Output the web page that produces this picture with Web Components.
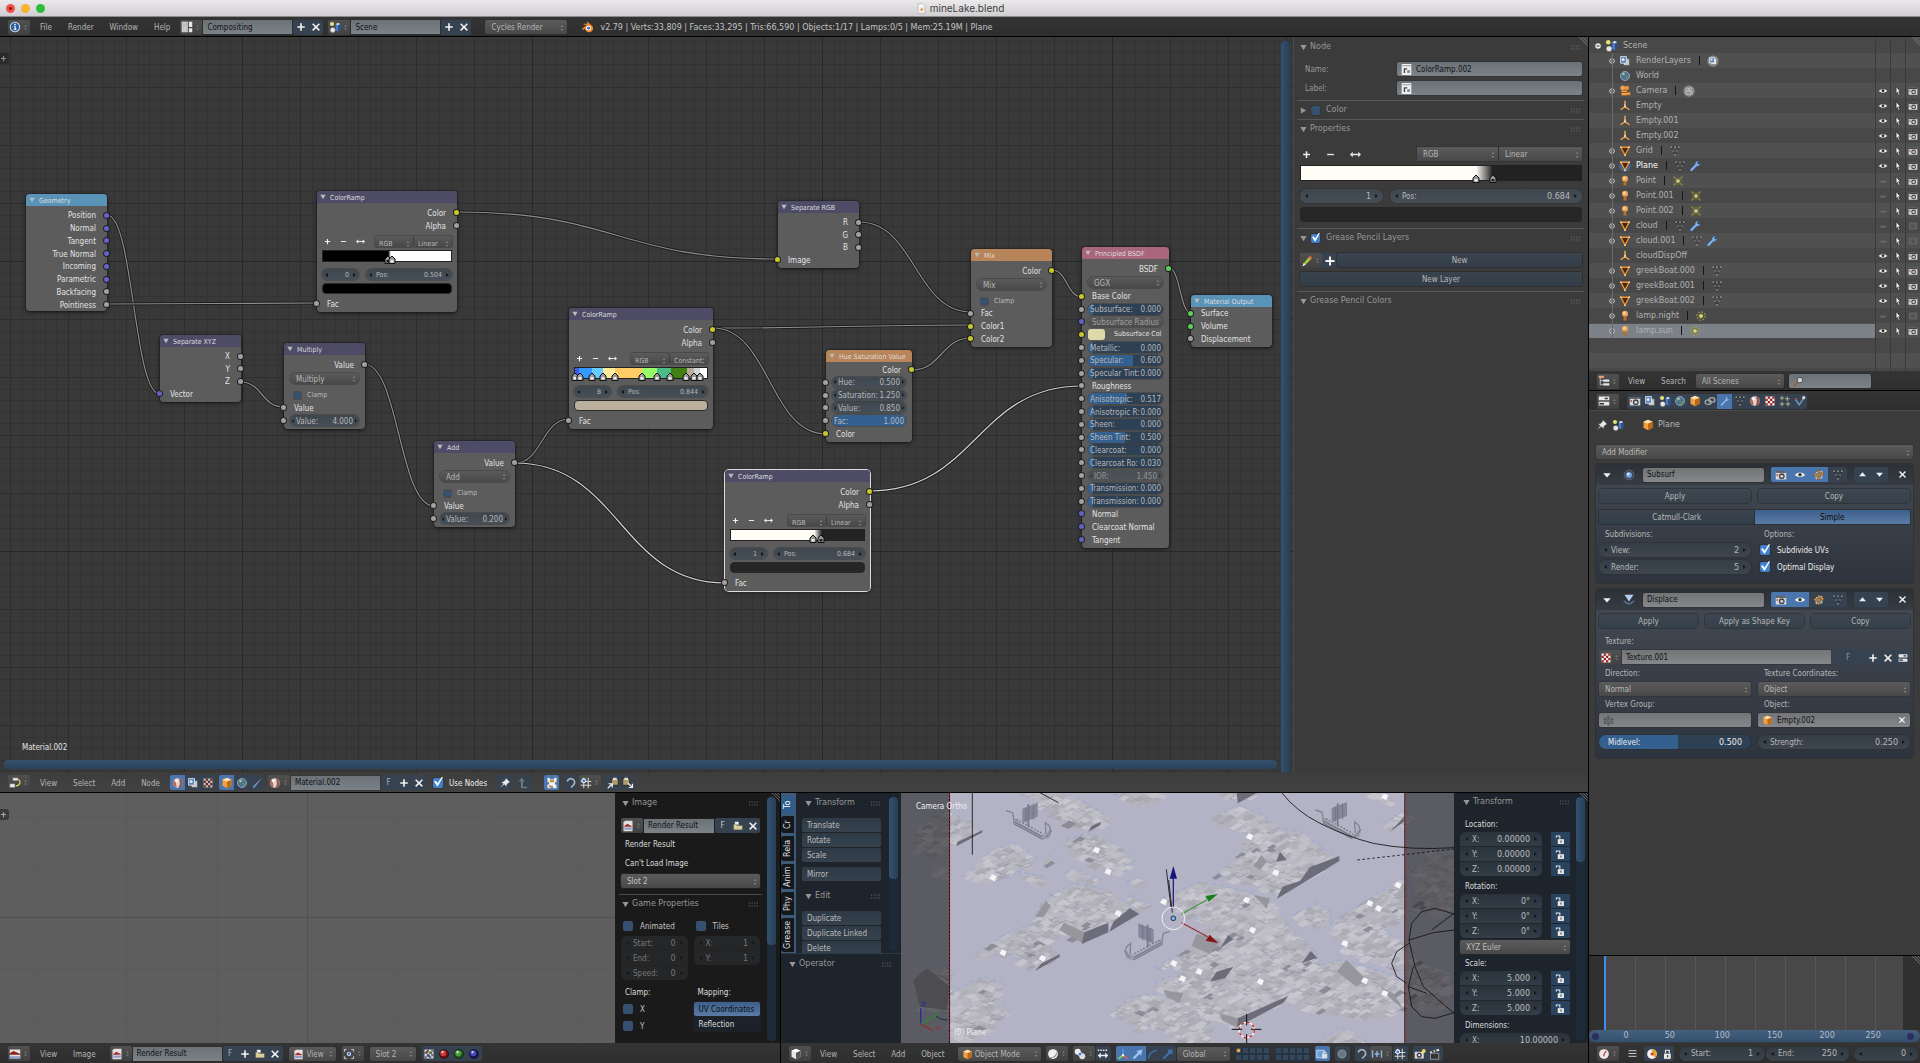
<!DOCTYPE html>
<html lang="en">
<head>
<meta charset="utf-8">
<title>mineLake.blend</title>
<style>
html,body{margin:0;height:100%;background:#3a3a3a}
body{overflow:hidden}
</style>
</head>
<body>
<blender-app></blender-app>
<script>
const BASE=`
*{box-sizing:border-box}
:host{display:block;min-width:0;font:8px/14px "DejaVu Sans Condensed","DejaVu Sans",sans-serif;color:var(--fg,#b8b8b8)}
button,input,select{font:inherit;color:inherit;margin:0;padding:0;border:0;background:none;min-width:0;outline:0;border-radius:0}
button,select{white-space:nowrap}
`;
const define=(name,css,render)=>customElements.define(name,class extends HTMLElement{
  connectedCallback(){
    if(this.shadowRoot)return;
    const root=this.attachShadow({mode:'open'});
    root.innerHTML='<style>'+BASE+css+'</style>'+render(this);
  }
});
const at=(el,n,d='')=>el.hasAttribute(n)?el.getAttribute(n):d;

/* ---------- icons, on a 16 unit grid ---------- */
const ball=(c,d)=>`<circle cx="8" cy="8" r="6" fill="${d}" stroke="#111" stroke-width=".8"/><circle cx="7" cy="7" r="4" fill="${c}"/><circle cx="6" cy="5.500" r="1.500" fill="#fff" opacity=".8"/>`;
const checker=(a,b)=>{let s=`<rect x="2" y="2" width="12" height="12" fill="${a}"/>`;for(let i=0;i<4;i++)for(let j=0;j<4;j++)if((i+j)%2)s+=`<rect x="${2+i*3}" y="${2+j*3}" width="3" height="3" fill="${b}"/>`;return s};
const lockBody='<rect x="4" y="7.500" width="9" height="7" fill="#e8e8e8"/><rect x="8" y="9.500" width="1.500" height="3" fill="#333"/>';
const ICON={
info:'<circle cx="8" cy="8" r="7" fill="#c9d6e8"/><circle cx="8" cy="8" r="5.600" fill="#2f5f9f"/><circle cx="8" cy="4.800" r="1.100" fill="#fff"/><path d="M6.500 7H9v4h1v1H6.300v-1h1V8h-.8z" fill="#fff"/>',
layout:'<path d="M1 1h8v14H1z" fill="#e8e8e8"/><path d="M10.500 1H15v7h-4.500zM10.500 9.500H15V15h-4.500z" fill="#e8e8e8"/><path d="M2.500 2.500h5v3h-5zM2.500 7h5v6.500h-5z" fill="#cfcfcf" stroke="#777" stroke-width=".5"/>',
scene:'<circle cx="4" cy="4" r="2.800" fill="#e5e07a"/><circle cx="5" cy="12" r="3.500" fill="#e8e8e8" stroke="#555" stroke-width=".6"/><path d="M9 4l3-1.500L15 4v8l-3 2-3-2z" fill="#4d7fc9"/><path d="M9 4l3-1.500L15 4l-3 1.500z" fill="#dfeaff"/><path d="M12 5.500L15 4v8l-3 2z" fill="#2b4f8f"/>',
blender:'<path d="M1 10.500L8 5H3.500V3.600H9L7.500 2l1.200-1 6 5.200a5 5 0 0 1-2 8.300 5.500 5.500 0 0 1-7.500-3.700L2 11.700z" fill="#f08a2c"/><circle cx="10" cy="9.500" r="3.300" fill="#fff"/><circle cx="10.200" cy="9.500" r="1.900" fill="#2a6fb5"/>',
plus:'<path d="M6.700 2h2.600v4.700H14v2.600H9.300V14H6.700V9.300H2V6.700h4.700z" fill="#f2f2f2"/>',
minus:'<path d="M2 6.800h12v2.400H2z" fill="#e8e8e8"/>',
swap:'<path d="M0 8l4-4v3h8V4l4 4-4 4V9H4v3z" fill="#e8e8e8"/>',
x:'<path d="M3.500 1.800L8 6.200l4.500-4.400 1.700 1.700L9.800 8l4.400 4.500-1.700 1.700L8 9.800l-4.500 4.400-1.700-1.700L6.200 8 1.800 3.500z" fill="#f2f2f2"/>',
nodes:'<path d="M5 1h7v4H5zM1 9h7v5H1z" fill="#e8e8e8" stroke="#555" stroke-width=".6"/><path d="M12 3c4 2 4 8-3 9" fill="none" stroke="#e0d060" stroke-width="1.600"/>',
mat:'<circle cx="8" cy="8" r="6.500" fill="#e9d2cc"/><path d="M9 1.600a6.500 6.500 0 0 1-1 12.900c3-3 3-9 1-12.900z" fill="#8a5a54"/><path d="M3 12c-2-3-2-5 0-8 2 2 3 6 3 10z" fill="#b06a5c"/><circle cx="6" cy="5" r="1.600" fill="#fff"/>',
layers:'<path d="M6 5h8v9H6z" fill="#c8c8c8" stroke="#555"/><path d="M2 2h8v9H2z" fill="#5d86bd" stroke="#eee"/><circle cx="5.500" cy="6" r="2" fill="#dfe8f5"/>',
checker:checker('#efefef','#9b2020'),
checkergrey:checker('#bdbdbd','#6b2a2a'),
checkerrgb:checker('#d8d8d8','#6a6a6a')+'<path d="M4 4h3v3H4z" fill="#a03030"/><path d="M9 5h3v3H9z" fill="#3a8a3a"/><path d="M6 9h3v3H6z" fill="#3a3aa0"/>',
cube:'<path d="M8 1l6 2.500v8L8 15l-6-3.500v-8z" fill="#f0a040"/><path d="M8 1l6 2.500L8 6.200 2 3.500z" fill="#ffe0b0"/><path d="M8 6.200l6-2.700v8L8 15z" fill="#b86a18"/>',
cubewhite:'<path d="M8 1l6 2.500v8L8 15l-6-3.500v-8z" fill="#e6e6e6"/><path d="M8 1l6 2.500L8 6.200 2 3.500z" fill="#fff"/><path d="M8 6.200l6-2.700v8L8 15z" fill="#555"/>',
world:'<circle cx="8" cy="8" r="6" fill="#4f6f98" stroke="#a9b9cf"/><path d="M4 4l4-1 1 3-3 2-3 0zM9 8l4 0-2 5-3-1z" fill="#5d8a60"/><circle cx="6" cy="5" r="1.500" fill="#dce8f5" opacity=".7"/>',
brush:'<path d="M15 1l-7 9-3 4-3 1 1-3 4-4z" fill="#6f8fb5"/>',
pin:'<path d="M9 1l6 6-2 .5-2.500 2.500-.5 3-3-3L1 15l4.500-6L3 6.500l3-.5L8.500 3.500z" fill="#e6e6e6" stroke="#444" stroke-width=".5"/>',
up:'<path d="M5 1l4 5H6.500v7H12v2H4V6H1z" fill="#777"/>',
back:'<path d="M2 1h3v2h6V1h3v6h-2v3h2v5H9v-3H7v3H2v-5h2V7H2z" fill="#f0f0f0"/><path d="M5 4h6v3H5zM4 11h3v3H4z" fill="#d08a30"/>',
magnet:'<path d="M3 6a5 5 0 1 1 9 4l-4 4" fill="none" stroke="#aeb4ba" stroke-width="2.200"/>',
snapgrid:'<path d="M5 1v14M11 1v14M1 6h14M1 11h14" stroke="#d5d5d5" stroke-width="1.400"/><circle cx="5" cy="5" r="3.200" fill="#fff"/><circle cx="5" cy="5" r="2" fill="#3f7fe0"/>',
copy:'<path d="M6 2h9v9H6z" fill="#b09a68" stroke="#222"/><path d="M8 1h5v3H8z" fill="#ddd"/><path d="M1 15l6-6M7 14V9H2" fill="none" stroke="#eee" stroke-width="1.600"/>',
paste:'<path d="M1 2h9v9H1z" fill="#b09a68" stroke="#222"/><path d="M3 1h5v3H3z" fill="#ddd"/><path d="M8 8l6 6M14 9v5H9" fill="none" stroke="#eee" stroke-width="1.600"/>',
image:'<path d="M4 1h10v14H2V3z" fill="#e8e0e0"/><path d="M2 3l2-2v2z" fill="#aaa"/><path d="M3 8l4-3 6 3v1H3z" fill="#a03030"/><path d="M3 10h10v3H3z" fill="#8d9cc8"/>',
imageed:'<path d="M1 2h14v12H1z" fill="#e8e0e0"/><path d="M1 7l5-3 9 4v1H1z" fill="#8a2020"/><path d="M1 11h14v3H1z" fill="#8d9cc8"/>',
folder:'<path d="M3 1h6v5H3z" fill="#eee"/><path d="M1 5h4l1 2h9v7H1z" fill="#d9cf9a" stroke="#555" stroke-width=".5"/>',
pivot:'<path d="M2 5V2h3M11 2h3v3M14 11v3h-3M5 14H2v-3" fill="none" stroke="#bbb" stroke-width="1.500"/><circle cx="8" cy="8" r="2.800" fill="#fff"/><circle cx="8" cy="8" r="1.900" fill="#3f7fe0"/>',
red:ball('#c83a3a','#701010'),green:ball('#4aa03a','#1c5a14'),blue:ball('#4a4ac0','#14145a'),
white:'<circle cx="8" cy="8" r="6.500" fill="#f2f2f2"/><path d="M12.500 4a6.500 6.500 0 0 1-9 8.500c5 0 9-3 9-8.500z" fill="#999"/>',
median:'<circle cx="5" cy="5" r="4" fill="#eee"/><circle cx="11" cy="11" r="4" fill="#ddd"/><circle cx="8" cy="8" r="2.500" fill="#3f6fd0" stroke="#fff"/>',
arrows:'<path d="M1 3h14" stroke="#eee" stroke-width="2" stroke-dasharray="2 1.500"/><path d="M1 10l4-4v3h6V6l4 4-4 4v-3H5v3z" fill="#eee"/>',
manip:'<path d="M8 1v9" stroke="#5a8aff" stroke-width="2.200"/><path d="M8 10l-6 4" stroke="#6fe05a" stroke-width="2.200"/><path d="M8 10l6 4" stroke="#f06050" stroke-width="2.200"/><circle cx="8" cy="9.500" r="1.500" fill="#fff"/>',
move:'<path d="M1 13L8 6 6 4l8-2-2 8-2-2-7 7z" fill="#9cc8f8"/>',
rotate:'<path d="M2 14Q3 5 13 3" fill="none" stroke="#3f6fa8" stroke-width="2"/>',
scale:'<path d="M1 13l7-7V2h6v6h-4l-7 7z" fill="#3f6fa8"/>',
locklayer:'<path d="M1 3h10v10H1z" fill="#6aa0e0" stroke="#dfe9f5"/><path d="M8 8h7v6H8z" fill="#ddd"/><path d="M9.500 8V5.500h4V8" fill="none" stroke="#ddd" stroke-width="1.300"/>',
prop:'<circle cx="8" cy="8" r="5" fill="#667380" stroke="#7d8893" stroke-width="2"/>',
snapbar:'<path d="M2 3v10M14 3v10M5 8h6M8 4v8" stroke="#8fb8e8" stroke-width="1.800"/>',
rendercam:'<path d="M1 3h14v11H1z" fill="#d8d8d8"/><path d="M1 3h14v2H1z" fill="#444"/><circle cx="9" cy="9.500" r="3.800" fill="#444"/><circle cx="9" cy="9.500" r="2" fill="#c9d4e4"/><path d="M2 7h2v2H2z" fill="#c03030"/>',
renderstar:'<path d="M1 5h12v9H1z" fill="#d8d8d8"/><circle cx="7" cy="9.500" r="3.400" fill="#444"/><circle cx="7" cy="9.500" r="1.500" fill="#eee"/><circle cx="13" cy="4" r="2.600" fill="#f0d850"/>',
clapper:'<path d="M2 7h11v8H2z" fill="#333" stroke="#ccc" stroke-width=".8"/><path d="M1 5l12-4 1 2.500L2 7z" fill="#ddd"/><path d="M4 4l2 2M8 3l2 2" stroke="#222" stroke-width="1.500"/>',
camobj:'<circle cx="5" cy="4" r="3.300" fill="#f0a24e"/><circle cx="10.500" cy="4" r="3" fill="#e8923a"/><path d="M3 7h8v3l4-1v5l-4-1v1H3z" fill="#f0a24e" stroke="#7a4a14" stroke-width=".6"/><path d="M3 10h8" stroke="#7a4a14"/>',
camdata:'<circle cx="8" cy="8" r="7.500" fill="#8a8a8a"/><circle cx="6" cy="6" r="2" fill="none" stroke="#ccc"/><circle cx="10" cy="5.500" r="1.800" fill="none" stroke="#ccc"/><path d="M4 8.500h6v1l2-.5v3l-2-.5v1H4z" fill="none" stroke="#ccc"/>',
layersdata:'<circle cx="8" cy="8" r="7.500" fill="#8a8a8a"/><path d="M6 5h6v7H6z" fill="#e8e8e8"/><path d="M3.500 3.500h6.500v7H3.500z" fill="#5d86bd" stroke="#eee"/><circle cx="6" cy="6" r="1.500" fill="#dfe8f5"/>',
empty:'<path d="M8 1v8M8 9l-6 4M8 9l6 4" stroke="#f0a24e" stroke-width="2" fill="none"/><path d="M8 6v4" stroke="#fff0d8" stroke-width="1.500"/>',
mesh:'<path d="M2.500 3h11L8 13.500z" fill="#3d2a14" stroke="#f0922f" stroke-width="1.800"/><path d="M1.500 2h2v2h-2zM12.500 2h2v2h-2zM7 12.500h2v2H7z" fill="#ffd9a8"/>',
meshdata:'<path d="M2.500 3h11L8 13z" fill="none" stroke="#2a2a2a" stroke-width="1"/><path d="M2 2h2v2H2zM7 2h2v2H7zM12 2h2v2h-2zM7 12h2v2H7zM4.500 7h1.500v2H4.500zM10 7h1.500v2H10z" fill="#999"/>',
wrench:'<path d="M2 12l6-6a4 4 0 0 1 5-4.500L11 4l1 1.500 2.700-1.300A4 4 0 0 1 10 8.500L4.500 14.500A1.700 1.700 0 0 1 2 12z" fill="#86b4ec" stroke="#254a7a" stroke-width=".7"/>',
lamp:'<circle cx="8" cy="5" r="4" fill="#f0a858"/><path d="M6 8.500h4V14H6z" fill="#b5712c"/><circle cx="7" cy="4" r="1.500" fill="#ffe0b5"/>',
point:'<path d="M2 2l3 3M14 2l-3 3M2 14l3-3M14 14l-3-3" stroke="#8c8a3c" stroke-width="1.800"/><circle cx="8" cy="8" r="2.600" fill="#c8c878"/><circle cx="8" cy="8" r="4.500" fill="none" stroke="#77763a"/>',
sun:'<circle cx="8" cy="8" r="3" fill="#d8d880" stroke="#6a6a2c"/><circle cx="8" cy="8" r="5.500" fill="none" stroke="#a09e3e" stroke-width="1.800" stroke-dasharray="2 2.300"/>',
eye:'<path d="M1 8q7-6.500 14 0-7 5.500-14 0z" fill="#f2f2f2"/><circle cx="8" cy="7.500" r="2.300" fill="#333"/>',
eyeoff:'<path d="M2 9q6-4 12 0-6 3-12 0z" fill="#6a6a6a"/>',
cursor:'<path d="M5 1l7 8H9l2 5-2 1-2-5-2 2z" fill="#f2f2f2" stroke="#111" stroke-width=".8"/>',
camoff:'<path d="M2 3h12v10H2z" fill="#5e5e5e" stroke="#6c6c6c"/><circle cx="8" cy="8" r="3" fill="#505050"/>',
outliner:'<path d="M1 1h7v3H1z" fill="#e0a070"/><path d="M7 6h8v3H7zM7 11h8v3H7z" fill="#e8e8e8"/><path d="M3 4v9h4M3 7.500h4" stroke="#ddd" fill="none"/>',
search:'<circle cx="10" cy="6" r="4" fill="#cfd6dc" stroke="#444" stroke-width="1.300"/><path d="M7 9l-6 6" stroke="#a05a3a" stroke-width="2.400"/>',
props:'<path d="M1 2h14v5H1zM1 9h14v5H1z" fill="#e8e8e8"/><path d="M9 3.500h4v2H9zM2 10.500h6v2H2z" fill="#333"/>',
link:'<g fill="none" stroke="#a8a8a8" stroke-width="1.800"><ellipse cx="5.500" cy="9.500" rx="4" ry="3"/><ellipse cx="10.500" cy="6.500" rx="4" ry="3"/></g>',
particles:'<path d="M4 1v6M1 4h6M11 2v6M8 5h6M4 9v6M1 12h6M12 9v6M9 12h6" stroke="#b5b58a" stroke-width="1.300"/>',
physics:'<path d="M2 6l5 7L14 3" fill="none" stroke="#7089b0" stroke-width="2.400"/><circle cx="13" cy="3.500" r="2.200" fill="#cfd6e0"/><circle cx="3" cy="5" r="1.500" fill="#b04848"/>',
subsurf:'<circle cx="8" cy="8" r="6.500" fill="#3c4654" stroke="#68717d"/><circle cx="8" cy="8" r="4" fill="#6f9ee0"/><circle cx="7" cy="6.800" r="1.700" fill="#e8f0fb"/>',
displace:'<path d="M2 1h12L8 10z" fill="#b5cdf0"/><path d="M1 9q7 8 14 0" fill="none" stroke="#5a6f90" stroke-width="1.800"/>',
edit:'<path d="M4 5l8-2v9l-8 1z" fill="#85898f" stroke="#ddd"/><path d="M1.500 6h3v3h-3zM6.500 1.500h3v3h-3zM11 5h3v3h-3zM6 11h3v3H6zM7 6.500h3v3H7z" fill="#f0a040" stroke="#5a3a10" stroke-width=".6"/>',
vgroup:'<g fill="none" stroke="#444" stroke-width="1.200"><circle cx="8" cy="8" r="2"/><circle cx="8" cy="3" r="1.500"/><circle cx="8" cy="13" r="1.500"/><circle cx="3" cy="6" r="1.500"/><circle cx="13" cy="6" r="1.500"/><circle cx="3" cy="11" r="1.500"/><circle cx="13" cy="11" r="1.500"/></g>',
nodefield:'<path d="M1 0h14v16H1z" fill="#efefef"/><path d="M2 2.500h12" stroke="#999" stroke-width="1.500"/><path d="M4 6h5v2H6v5H4z" fill="#444"/><path d="M9 9h4v4H9z" fill="#888"/>',
pencil:'<path d="M12 1l3 3-9 9-4 2 1.500-4z" fill="#a8c83c"/><path d="M12 1l3 3-2 2-3-3z" fill="#e0504a"/><path d="M3.500 11L6 13l-4 2z" fill="#eee"/>',
tri:'<path d="M1 2h14L8 14z" fill="currentColor"/>',triup:'<path d="M2 11h12L8 4z" fill="#f2f2f2"/>',tridown:'<path d="M2 5h12L8 12z" fill="#f2f2f2"/>',
triright:'<path d="M2 1v14l12-7z" fill="currentColor"/>',
grip:'<path d="M0 5.500h16M0 10.500h16" stroke="#777" stroke-width="1.500" stroke-dasharray="2 2.600"/>',
unlock:lockBody+'<path d="M7 7V3H2v2" fill="none" stroke="#e8e8e8" stroke-width="1.600"/>',
lock:lockBody+'<path d="M6 7V3h5v4" fill="none" stroke="#e8e8e8" stroke-width="1.600"/>',
clock:'<circle cx="8" cy="8" r="6.500" fill="#f0e4e4"/><path d="M8 8l3-4M8 8v3" stroke="#a03030" stroke-width="1.500"/>',
lines:'<path d="M1 3h14M1 8h14M1 13h14" stroke="#ddd" stroke-width="1.600"/>',
pie:'<circle cx="8" cy="8" r="6.500" fill="#f2f2f2"/><path d="M8 8V1.500A6.500 6.500 0 0 1 12 13z" fill="#e8a030"/><circle cx="8" cy="8" r="2" fill="#d04030"/>',
doc:'<path d="M3 1h7l3 3v11H3z" fill="#f6f6f6" stroke="#aaa"/><path d="M5 10l4-4 2 3-2 3z" fill="#e8a060"/>',
expand:'<circle cx="8" cy="8" r="4.500" fill="#222" stroke="#ddd" stroke-width="2"/><path d="M5.500 8h5M8 5.500v5" stroke="#ddd" stroke-width="1.300"/>',
collapse:'<circle cx="8" cy="8" r="5.500" fill="#eee"/><path d="M5 8h6" stroke="#222" stroke-width="2"/>',
hatch:'<path d="M2 0l14 14M7 0l9 9M12 0l4 4" stroke="#8a8a8a" stroke-width="1.300"/>',
updown:'<path d="M5 6l3-4 3 4zM5 10l3 4 3-4z" fill="#7d7d7d"/>'
};
define('bl-icon',`:host{display:inline-flex;flex:none;width:var(--s,12px);height:var(--s,12px);color:inherit}svg{width:100%;height:100%;display:block}`,
 e=>`<svg viewBox="0 0 16 16" aria-hidden="true">${ICON[at(e,'name')]||''}</svg>`);
const ic=(n,s)=>`<bl-icon name="${n}"${s?` style="--s:${s}px"`:''}></bl-icon>`;

/* ---------- controls ---------- */
define('bl-menus',`:host{display:flex;align-items:center;gap:16px}button{padding-top:2px}`,
 e=>at(e,'items').split(',').map(t=>`<button>${t}</button>`).join(''));
define('bl-select',`
:host{display:grid;height:14px;background:linear-gradient(#5b5b5b,#484848);border-radius:var(--r,2px);box-shadow:0 0 0 1px #2c2c2c66;overflow:hidden;align-items:center}
:host([dim]){opacity:.75}
select,.i,.u{grid-area:1/1}
select{appearance:none;width:100%;height:100%;padding:1px var(--pr,12px) 0 var(--pl,6px)}
.i{pointer-events:none;margin-left:4px;display:flex}
.u{justify-self:end;pointer-events:none;display:flex;margin-right:1px}`,
 e=>`<select aria-label="${at(e,'name',at(e,'value'))}"><option>${at(e,'value')}</option></select>${at(e,'icon')?`<span class="i">${ic(at(e,'icon'),11)}</span>`:''}<span class="u">${ic('updown',8)}</span>`);
define('bl-type',`
:host{display:block;flex:none}
button{display:flex;align-items:center;height:15px;width:22px;justify-content:space-between;padding:0 1px;background:linear-gradient(#505050,#414141);border-radius:2px}`,
 e=>`<button aria-label="${at(e,'icon')}">${ic(at(e,'icon'))}${ic('updown',7)}</button>`);
define('bl-tool',`
:host{display:flex;flex:none;height:15px;background:#36424f;border-radius:2px;overflow:hidden}
button{display:flex;align-items:center;justify-content:center;width:var(--w,15px);height:100%}
button.on{background:#4a76ad}`,
 e=>{const on=at(e,'on').split(',');return at(e,'icons').split(',').map(n=>`<button aria-label="${n}" class="${on.includes(n)?'on':''}">${n==='F'?'F':ic(n,+at(e,'size','12'))}</button>`).join('')});
define('bl-field',`
:host{display:block}
label{display:flex;align-items:center;height:14px;background:linear-gradient(#6a7177,#7c8388);border-radius:var(--r,2px);color:#111;padding:0 4px;gap:4px;box-shadow:0 0 0 1px #2a2a2a66}
:host([grey]) label{background:linear-gradient(#727476,#85878a)}
input{flex:1;width:0;padding-top:1px}`,
 e=>`<label>${at(e,'icon')?ic(at(e,'icon'),11):''}<input type="text" aria-label="${at(e,'name','name')}" value="${at(e,'value')}">${at(e,'end')?ic(at(e,'end'),8):''}</label>`);
define('bl-num',`
:host{display:block}
label{display:flex;align-items:center;height:var(--h,14px);padding:0 var(--px,5px);border-radius:var(--r,7px);background:var(--num,linear-gradient(#3e464e,#464f57));box-shadow:0 0 0 1px #2a2a2a55;overflow:hidden;white-space:nowrap}
label::before,label::after{content:"";border:2px solid transparent;border-width:2px var(--aw,3px);flex:none}
label::before{border-right-color:#16191c;border-left-width:0;margin-right:var(--am,4px)}
label::after{border-left-color:#16191c;border-right-width:0;margin-left:var(--am,4px)}
:host([slide]) label{background:linear-gradient(90deg,#33608f var(--fill,0%),#2e4054 var(--fill,0%));padding:0 var(--sp,9px)}
:host([slide]) label::before,:host([slide]) label::after{display:none}
:host([dim]){opacity:.6}
span{flex:none;padding-top:1px}
input{flex:1;width:0;padding-top:1px;text-align:right;font-family:var(--numfont,"DejaVu Sans"),sans-serif}`,
 e=>`<label><span>${at(e,'label')}</span><input type="text" aria-label="${at(e,'name',at(e,'label','value'))}" value="${at(e,'value')}"></label>`);
define('bl-check',`
:host{display:block}
label{display:flex;align-items:center;gap:var(--g,6px);color:var(--cfg,inherit);white-space:nowrap}
input{appearance:none;flex:none;width:var(--b,10px);height:var(--b,10px);background:#35516f;border-radius:2px;position:relative;box-shadow:0 0 0 1px #22222244}
input:checked{background:#4280cc}
input:checked::before{content:"";position:absolute;inset:-1px 0 1px 1px;background:#fff;clip-path:polygon(0 50%,22% 42%,40% 68%,88% 0,100% 6%,44% 96%,34% 96%)}
span{padding-top:1px;line-height:13px}`,
 e=>`<label><input type="checkbox" ${e.hasAttribute('checked')?'checked':''}${at(e,'label')?'':' aria-label="toggle"'}>${at(e,'label')?`<span>${at(e,'label')}</span>`:''}</label>`);
define('bl-button',`
:host{display:block}
button{display:block;width:100%;height:14px;background:var(--btn,linear-gradient(#3a444e,#333d48));border-radius:var(--r,2px);box-shadow:0 0 0 1px #26262688;text-align:var(--ta,center);padding:1px 5px 0}
:host([on]) button{background:linear-gradient(#3d5f8b,#5a7ba5);color:#0c0c0c}`,
 e=>`<button>${at(e,'label')}</button>`);
define('bl-panel',`
:host{border-top:1px solid var(--line,#565656)}
:host([first]){border-top-color:transparent}
header{display:flex;align-items:center;height:18px;gap:3px;padding:0 4px 0 var(--hp,3px);font-family:"DejaVu Sans",sans-serif;color:#979797;--b:9px;white-space:nowrap}
h2{font:inherit;margin:0;flex:1}
bl-check{margin:0 3px 0 1px}`,
 e=>`<header>${ic(at(e,'closed')?'triright':'tri',7)}${at(e,'check')?`<bl-check ${at(e,'check')==='on'?'checked':''}></bl-check>`:''}<h2>${at(e,'title')}</h2>${ic('grip',9)}</header><slot></slot>`);
define('bl-scroll',`:host{width:9px;height:100%;background:var(--track,#1d2a38);border-radius:4px;overflow:hidden}
div{background:linear-gradient(90deg,#33516f,#283f57);border-radius:4px;width:100%;height:var(--t,100%)}`,()=>`<div></div>`);
define('bl-ramp',`
:host{position:relative;height:12px;box-sizing:border-box;border:1px solid #222;background:var(--g)}
svg{position:absolute;bottom:-3px;width:8px;height:9px;margin-left:-4px}`,
 e=>at(e,'stops').split(',').map(s=>`<svg style="left:${s}%" viewBox="0 0 8 9"><path d="M1 8.500V4l3-3 3 3v4.500z" fill="#999" stroke="#111"/><path d="M2.500 5h3v2.500h-3z" fill="${at(e,'dark')===s?'#222':'#eee'}"/></svg>`).join(''));

/* ---------- node editor ---------- */
const COL={y:'#c7c729',g:'#a1a1a1',v:'#6363c7',s:'#5fcf5f'};
define('node-row',`
:host{display:flex;box-sizing:border-box;align-items:center;position:relative;padding:0 6px;flex:0 0 13px;line-height:12px;color:#e2e2e2;--h:11px;--r:6px;--px:2px;--am:2px;--sp:2px;--aw:2px;--pr:2px;--numfont:"DejaVu Sans Condensed"}
:host([flex]){flex:1 1 0;min-height:0}
:host([out]){justify-content:flex-end;padding-right:11px}
:host([tall]){flex-basis:15px}
:host([text]){padding-left:10px}
span{height:12px;line-height:14px}
i{position:absolute;left:-3px;top:0;bottom:0;margin:auto 0;width:5px;height:5px;border-radius:50%;box-shadow:0 0 0 1px #222}
:host([out]) i{left:auto;right:-2px}
::slotted(*){flex:1;line-height:11px!important;height:11px}
::slotted(bl-num),::slotted(bl-select){font-size:inherit!important}`,
 e=>`${at(e,'c')?`<i style="background:${COL[at(e,'c')]}"></i>`:''}${at(e,'label')?`<span>${at(e,'label')}</span>`:''}<slot></slot>`);
define('bl-node',`
:host{position:absolute;left:calc(var(--x)*1px);top:calc(var(--y)*1px - 37px);width:calc(var(--w)*1px);height:calc(var(--ht)*1px);display:flex;flex-direction:column;border-radius:4px;background:#5f5f5ff0;box-shadow:0 1px 4px #0009,0 0 0 1px #2226;font-size:var(--nf)}
:host([sel]){box-shadow:0 0 0 1px #ddd,0 1px 4px #000a}
header{flex:none;height:12px;display:flex;align-items:center;gap:4px;padding-left:3px;border-radius:4px 4px 0 0;background:var(--hd,#4e4b66);color:#ddd;white-space:nowrap}
header bl-icon{color:#bbb}
header span{height:12px;line-height:14px}
.b{flex:1;display:flex;flex-direction:column;padding:var(--pt,3px) 0 var(--pb,2px);min-height:0}`,
 e=>`<header>${ic('tri',6)}<span>${at(e,'title')}</span></header><div class="b"><slot></slot></div>`);
const box=(x,y,w,h)=>`style="--x:${x};--y:${y};--w:${w};--ht:${h}`;
const row=(label,c,o='')=>`<node-row ${o} ${o.includes('out')?'':'text'} c="${c}" label="${label}"></node-row>`;
const num=(label,value,c='g',o='',style='')=>`<node-row flex c="${c}"><bl-num style="font-size:7px;${style}" ${o} label="${label}" value="${value}"></bl-num></node-row>`;
define('node-rampops',`
:host{display:flex;flex-direction:column;padding:4px 5px 3px;gap:3px;line-height:11px;font-size:7px;color:#d0d0d0;--numfont:"DejaVu Sans Condensed"}
.o{display:flex;align-items:center;height:11px}
.o bl-icon{margin:0 7px 0 2px}
.o .s{margin-left:auto;display:flex;gap:1px;--pl:4px;--pr:1px}
bl-select{height:11px;font-size:7px}
.n{display:flex;gap:7px;margin-top:4px;--h:11px;--px:3px}
bl-num{font-size:7px;line-height:10px}
.c{height:11px;border-radius:4px;border:1px solid #2a2a2a}`,
 e=>`<div class="o">${ic('plus',7)}${ic('minus',7)}${ic('swap',9)}<div class="s"><bl-select value="RGB" name="Color mode" style="width:38px"></bl-select><bl-select value="${at(e,'mode')}" name="Interpolation" style="width:38px"></bl-select></div></div>
 <bl-ramp stops="${at(e,'stops')}" dark="${at(e,'dark')}" style="--g:linear-gradient(90deg,${at(e,'g')})"></bl-ramp>
 <div class="n"><bl-num style="width:37px" value="${at(e,'n')}" name="Active stop"></bl-num><bl-num style="flex:1" label="Pos:" value="${at(e,'pos')}"></bl-num></div><div class="c" style="background:${at(e,'c')}"></div>`);
const CR2='#3b5bea 3%,#39f 3% 13%,#6cf 13% 21.5%,#ffec99 21.5% 30%,#fc6 30% 51%,#9f6 51% 62%,#4dbb88 62% 72.5%,#3f8010 72.5% 84.7%,#b8ab98 84.7% 90%,#d4d4d4 90% 95%,#fff 95%';
const CR3='#fffdf6 62.5%,#222 68.4%';
const ramp=(x,y,w,o,extra)=>`<bl-node title="ColorRamp" ${extra||''} ${box(x,y,w,121)}">${row('Color','y','out')}${row('Alpha','g','out')}<node-rampops ${o}></node-rampops>${row('Fac','g')}</bl-node>`;
const clamp='<node-row tall text><bl-check label="Clamp" style="--b:7px;--cfg:#bbb;font-size:7px"></bl-check></node-row>';
const pick=v=>`<node-row tall><bl-select value="${v}" style="font-size:7px"></bl-select></node-row>`;
const slides=a=>a.map(r=>num(r[0],r[1],'g','slide',`--fill:${r[2]}%`)).join('');
const L=[[107,215,160,394],[107,304,317,303],[457,212,778,259],[859,222,971,312],[241,382,283,407],[364,364,434,506],[515,463,569,419],[713,328,971,325],[713,328,826,434],[912,370,971,338],[1052,270,1082,297],[1169,268,1191,313],[515,463,725,583,1],[870,491,1082,386,1]];
const path=([a,b,c,d])=>{const k=(c-a)/2;return `M${a} ${b}C${a+k} ${b} ${c-k} ${d} ${c} ${d}`};
define('node-canvas',`
:host{position:relative;overflow:hidden;background:#393939;--nf:7px}
svg{position:absolute;left:0;top:0}
.m{position:absolute;left:22px;bottom:17px;color:#e8e8e8}
.v{position:absolute;right:3px;top:4px;bottom:14px;width:9px}
.h{position:absolute;left:4px;right:16px;bottom:3px;height:9px;border-radius:4px;background:linear-gradient(#34506c,#2b435b)}
.t{position:absolute;left:0;top:16px;width:9px;height:11px;background:#2a2a2a;border-radius:0 3px 3px 0;display:flex;align-items:center}
.t bl-icon{opacity:.5}
.sl{display:flex;width:100%;align-items:center;gap:9px;color:#e2e2e2;font-size:7px;white-space:nowrap}
.sl b{width:17px;height:11px;border-radius:3px;background:#ded9a8}`,
 ()=>`<svg width="1293" height="736" viewBox="0 37 1293 736">
 <defs><pattern id="g" x="10" y="29" width="58" height="58" patternUnits="userSpaceOnUse"><path d="M12.500 0v58M23.500 0v58M35.500 0v58M46.500 0v58M0 12.500h58M0 23.500h58M0 35.500h58M0 46.500h58" stroke="#333" fill="none"/><path d="M.5 0v58M0 .5h58" stroke="#2e2e2e" fill="none"/></pattern></defs>
 <rect y="37" width="1293" height="736" fill="url(#g)"/><path d="M242.500 37v736M532.500 37v736M822.500 37v736M1112.500 37v736M0 261.500h1293M0 551.500h1293" stroke="#282828"/>
 ${L.map(l=>`<path d="${path(l)}" fill="none" stroke="#1c1c1c" stroke-width="3"/><path d="${path(l)}" fill="none" stroke="${l[4]?'#d0d0d0':'#8c8c8c'}" stroke-width="1.200"/>`).join('')}</svg>
 <bl-node title="Geometry" ${box(26,194,81,117)};--hd:#5a93b8;--pb:0px">${['Position','Normal','Tangent','True Normal','Incoming','Parametric','Backfacing','Pointiness'].map((t,i)=>row(t,i<6?'v':'g','out flex')).join('')}</bl-node>
 ${ramp(317,191,140,'mode="Linear" stops="51,54" dark="51" g="#000 51%,#fff 53%" n="0" pos="0.504" c="#000"')}
 <bl-node title="Separate XYZ" ${box(160,335,81,67)}">${['X','Y','Z'].map(t=>row(t,'g','out flex')).join('')}${row('Vector','v','flex')}</bl-node>
 <bl-node title="Multiply" ${box(284,343,81,86)}">${row('Value','g','out')}${pick('Multiply')}${clamp}${row('Value','g')}${num('Value:','4.000')}</bl-node>
 <bl-node title="Add" ${box(434,441,81,86)}">${row('Value','g','out')}${pick('Add')}${clamp}${row('Value','g')}${num('Value:','0.200')}</bl-node>
 ${ramp(569,308,144,`mode="Constant" stops="0,4,13,21,30,51,62,72,84,90,95" dark="" g="${CR2}" n="8" pos="0.844" c="#bbb09d"`)}
 ${ramp(725,470,145,`mode="Linear" stops="62,68" dark="68" g="${CR3}" n="1" pos="0.684" c="#262626"`,'sel')}
 <bl-node title="Separate RGB" ${box(778,201,81,67)}">${['R','G','B'].map(t=>row(t,'g','out flex')).join('')}${row('Image','y','flex')}</bl-node>
 <bl-node title="Mix" ${box(971,249,81,98)};--hd:#b8845a">${row('Color','y','out')}${pick('Mix')}${clamp}${row('Fac','g','flex')}${row('Color1','y','flex')}${row('Color2','y','flex')}</bl-node>
 <bl-node title="Hue Saturation Value" ${box(826,350,86,92)};--hd:#b8845a;--pt:1px">${row('Color','y','out')}${num('Hue:','0.500')}${num('Saturation:','1.250')}${num('Value:','0.850')}${num('Fac:','1.000','g','slide','--fill:100%')}${row('Color','y','flex')}</bl-node>
 <bl-node title="Principled BSDF" ${box(1082,247,87,301)};--hd:#a8667c">${row('BSDF','s','out')}${pick('GGX')}${row('Base Color','y','flex')}
 ${slides([['Subsurface:','0.000',6]])}<node-row flex c="v"><bl-select dim value="Subsurface Radius" style="font-size:7px;--pl:4px"></bl-select></node-row><node-row flex c="y"><div class="sl"><b></b><span>Subsurface Col</span></div></node-row>
 ${slides([['Metallic:','0.000',6],['Specular:','0.600',60],['Specular Tint:','0.000',6]])}${row('Roughness','g','flex')}
 ${slides([['Anisotropic:','0.517',52],['Anisotropic R:','0.000',6],['Sheen:','0.000',6],['Sheen Tint:','0.500',50],['Clearcoat:','0.000',6],['Clearcoat Ro:','0.030',7]])}${num('IOR:','1.450','g','dim')}${slides([['Transmission:','0.000',6],['Transmission:','0.000',6]])}
 ${row('Normal','v','flex')}${row('Clearcoat Normal','v','flex')}${row('Tangent','v','flex')}</bl-node>
 <bl-node title="Material Output" ${box(1191,295,81,52)};--hd:#5a93b8;--pt:0px">${row('Surface','s','flex')}${row('Volume','s','flex')}${row('Displacement','g','flex')}</bl-node>
 <button class="t" aria-label="Open tool shelf">${ic('plus',7)}</button><div class="m">Material.002</div><bl-scroll class="v"></bl-scroll><div class="h"></div>`);

define('node-sidebar',`
:host{background:#3b3b3b;border-left:1px solid #4a4a4a;padding:0 4px 0 3px;position:relative;overflow:hidden}
.f{display:grid;grid-template-columns:92px 1fr;row-gap:5px;padding:6px 2px 5px 8px;color:#999}
.f span{padding-top:1px;line-height:13px}
.b{padding:9px 2px 6px 3px;display:flex;flex-direction:column}
.o{display:flex;align-items:center;margin-bottom:4px;height:14px;--r:1px}
.o bl-icon{margin-left:2px;margin-right:13px}
.n{display:flex;gap:7px;margin:8px 0 4px}
.c{height:15px;background:#262626;border-radius:4px}
.g{display:flex;flex-direction:column;gap:5px;padding:6px 2px 5px 3px}
.r{display:flex;height:14px}.r bl-button{flex:1}
.k{position:absolute;right:0;top:0}`,
 ()=>`<bl-panel first title="Node"><div class="f"><span>Name:</span><bl-field icon="nodefield" name="Name" value="ColorRamp.002"></bl-field><span>Label:</span><bl-field icon="nodefield" name="Label"></bl-field></div></bl-panel>
 <bl-panel title="Color" closed="1" check="off"></bl-panel>
 <bl-panel title="Properties"><div class="b"><div class="o">${ic('plus',9)}${ic('minus',9)}${ic('swap',11)}<bl-select value="RGB" name="Color mode" style="width:81px;margin-left:auto;margin-right:1px"></bl-select><bl-select value="Linear" name="Interpolation" style="width:83px"></bl-select></div>
 <bl-ramp stops="62.400,68.400" dark="68.400" style="height:16px;--g:linear-gradient(90deg,${CR3})"></bl-ramp>
 <div class="n"><bl-num style="width:83px" name="Active stop" value="1"></bl-num><bl-num style="flex:1" label="Pos:" value="0.684"></bl-num></div><div class="c"></div></div></bl-panel>
 <bl-panel title="Grease Pencil Layers" check="on"><div class="g"><div class="r"><bl-type icon="pencil"></bl-type><bl-tool icons="plus"></bl-tool><bl-button label="New"></bl-button></div><bl-button label="New Layer"></bl-button></div></bl-panel>
 <bl-panel title="Grease Pencil Colors"></bl-panel><div class="k">${ic('hatch',10)}</div>`);

define('bl-bar',`
:host{display:flex;box-sizing:border-box;align-items:center;height:20px;background:linear-gradient(#343434,#2e2e2e);padding:1px 2px 0 8px;--fg:#b5b5b5;white-space:nowrap;overflow:hidden}
:host([light]){background:linear-gradient(#3d3d3d,#424242)}`,()=>`<slot></slot>`);
define('id-block',`
:host{display:flex;align-items:center;--r:0;flex:none}
bl-field{width:var(--fw,89px);margin-left:1px}bl-tool{margin-left:1px}`,
 e=>`<bl-type icon="${at(e,'icon')}"></bl-type><bl-field value="${at(e,'value')}"></bl-field><bl-tool icons="${at(e,'tools')}" size="10"></bl-tool>`);

define('node-editor',`
:host{display:flex;flex-direction:column;min-height:0}
.c{flex:1;display:grid;grid-template-columns:minmax(0,1fr) 295px;min-height:0}
bl-bar>*{margin-right:4px}`,
 ()=>`<div class="c"><node-canvas></node-canvas><node-sidebar></node-sidebar></div>
 <bl-bar light><bl-type icon="nodes" style="margin-right:10px"></bl-type><bl-menus items="View,Select,Add,Node" style="margin-right:10px"></bl-menus>
 <bl-tool icons="mat,layers,checkergrey" on="mat"></bl-tool><bl-tool icons="cube,world,brush" on="cube"></bl-tool><id-block icon="mat" value="Material.002" tools="F,plus,x" style="margin-right:7px"></id-block>
 <bl-check checked label="Use Nodes" style="--cfg:#eee;margin-right:10px"></bl-check><bl-tool icons="pin"></bl-tool><bl-tool icons="up" style="margin-right:13px"></bl-tool><bl-tool icons="back" on="back"></bl-tool><bl-tool icons="magnet" style="margin-right:1px"></bl-tool><bl-type icon="snapgrid"></bl-type><bl-tool icons="copy,paste"></bl-tool></bl-bar>`);

/* ---------- image editor ---------- */
define('image-editor',`
:host{display:flex;flex-direction:column;border-right:1px solid #000;min-height:0}
.c{flex:1;display:grid;grid-template-columns:minmax(0,1fr) 165px;min-height:0}
.v{background:#5e5e5e;position:relative;overflow:hidden}
.v svg{position:absolute;left:0;top:0}
.t{position:absolute;left:0;top:16px;width:9px;height:11px;background:#3a3a3a;border-radius:0 3px 3px 0;display:flex;align-items:center}
.t bl-icon{opacity:.6}
.s{background:#1a1a1a;display:flex;--line:#4a4a4a;--fg:#c4c4c4;overflow:hidden;position:relative}
.p{flex:1;padding:0 5px 0 4px;min-width:0}
bl-scroll{margin:4px 4px 2px 0}
.b{padding:6px 2px 6px;display:flex;flex-direction:column}
.b span{margin-top:5px;padding-left:4px;color:#ddd}
.b bl-select{margin-top:3px}
.g{display:grid;grid-template-columns:1fr 1fr;column-gap:6px;padding:6px 2px 7px;--g:7px}
.g bl-check{padding-left:2px}
.n{display:flex;flex-direction:column;gap:1px;margin-top:3px;--num:#252627;--fg:#777;border-radius:6px;overflow:hidden;--r:0}
.l{margin-top:6px;padding-left:4px;color:#ddd}
.w{margin-top:21px}
.k{display:flex;flex-direction:column;gap:3px;padding-top:2px}
.u{display:flex;flex-direction:column;gap:1px;margin-top:2px;--btn:#1b2229;--fg:#ddd;--ta:left}
bl-bar>*{margin-right:6px}
.h{position:absolute;right:0;top:0}`,
 ()=>`<div class="c"><div class="v"><svg width="615" height="250" viewBox="0 793 615 250"><path d="M38 793v250M127 793v250M217 793v250M398 793v250M488 793v250M578 793v250M0 817h615M0 867h615M0 969h615M0 1018h615" stroke="#5a5a5a"/><path d="M307.500 793v250M0 917.500h615" stroke="#505050"/></svg><button class="t" aria-label="Open tool shelf">${ic('plus',7)}</button></div>
 <div class="s"><div class="p"><bl-panel first title="Image"><div class="b"><id-block icon="image" value="Render Result" tools="F,folder,x" style="--fw:71px"></id-block><span>Render Result</span><span>Can't Load Image</span><bl-select value="Slot 2"></bl-select></div></bl-panel>
 <bl-panel title="Game Properties"><div class="g"><div><bl-check label="Animated"></bl-check><div class="n"><bl-num label="Start:" value="0"></bl-num><bl-num label="End:" value="0"></bl-num><bl-num label="Speed:" value="0"></bl-num></div><div class="l">Clamp:</div><div class="k"><bl-check label="X"></bl-check><bl-check label="Y"></bl-check></div></div>
 <div><bl-check label="Tiles"></bl-check><div class="n"><bl-num label="X:" value="1"></bl-num><bl-num label="Y:" value="1"></bl-num></div><div class="l w">Mapping:</div><div class="u"><bl-button on label="UV Coordinates"></bl-button><bl-button label="Reflection"></bl-button></div></div></div></bl-panel></div><bl-scroll style="height:auto;--t:148px"></bl-scroll><div class="h">${ic('hatch',9)}</div></div></div>
 <bl-bar><bl-type icon="imageed" style="margin-right:10px"></bl-type><bl-menus items="View,Image" style="margin-right:14px"></bl-menus><id-block icon="image" value="Render Result" tools="F,plus,folder,x" style="margin-right:6px"></id-block><bl-select icon="image" value="View" style="width:47px;--pl:18px"></bl-select><bl-type icon="pivot"></bl-type><bl-select value="Slot 2" style="width:46px"></bl-select><bl-tool icons="checkerrgb,red,green,blue"></bl-tool></bl-bar>`);

/* ---------- 3D view ---------- */
const ISLES=[
[370,30,480,30,560,70,635,115,570,150,500,125,420,75],[640,45,740,30,820,30,760,65,720,70],
[490,205,500,180,560,160,620,175,705,240,680,275,630,280,560,240],[190,285,230,255,260,225,335,185,370,205,410,240,330,290,290,302,240,300],
[350,275,440,290,405,318],[425,245,445,225,470,240,440,255],[495,280,520,262,595,300,570,310],[680,305,710,295,735,312,710,325],[690,345,750,375,725,390,680,360],
[405,405,440,355,520,310,600,325,640,345,715,390,640,420,550,485,490,455,430,490,480,525,405,570,330,520,250,532,228,518,330,455,410,430],
[950,110,1010,75,1080,100,1135,145,1200,155,1315,235,1220,290,1130,350,1060,315,950,285,1020,220,1050,170],
[785,355,900,305,980,320,1060,340,1130,380,1170,440,1250,520,1240,560,1320,540,1400,560,1520,600,1520,690,1400,705,1250,695,1160,650,1020,740,900,720,760,610,880,560,760,565,880,500,930,440,840,380],
[640,700,680,655,770,640,860,680,940,750,900,795,840,795,780,740,720,745],
[1290,430,1400,360,1520,290,1520,410,1440,440,1520,500,1520,570,1340,510,1320,470],
[1180,405,1250,370,1300,395,1250,448],[150,640,250,590,315,610,290,650,330,700,250,760,200,780,150,760],
[150,95,245,150,172,190,150,185],[1250,790,1320,742,1410,790],[1450,130,1512,95,1550,110,1470,153],[1400,30,1440,30,1478,60,1455,72],
[950,30,1080,30,1015,65],[60,130,100,100,150,95,150,180,90,230,40,195],[40,610,80,565,150,560,150,690,60,690],[80,265,148,240,150,290,120,295],
[1530,290,1570,215,1662,205,1662,400,1560,410],[1520,500,1600,560,1662,580,1662,700,1540,680]];
const CLIFF=['545 492 553 457 625 428 625 457','628 455 640 425 690 385 718 402','1130 357 1148 320 1200 303 1230 262 1318 228 1318 243 1240 290','1010 742 1014 714 1165 648 1150 668','565 155 575 138 603 125 600 136','170 198 172 186 248 150 246 158','405 573 425 550 480 522 478 532','1013 70 1010 35 1078 35','1205 550 1232 513 1252 533','1128 245 1140 215 1160 240','930 605 950 575 1000 560 975 595','960 505 985 465 1000 478','1470 155 1512 110 1512 125'];
const SIDE=['478 450 548 490 557 458 492 428','875 498 890 462 962 480 930 522','405 410 438 362 452 378 430 412','1060 258 1085 225 1100 245 1080 270','790 630 850 640 838 668 800 650','960 700 1015 715 1008 742 965 720','1310 575 1340 540 1400 600 1370 620','1440 620 1480 640 1512 690 1470 655','1060 345 1110 355 1100 385','40 600 80 565 150 620 140 690 60 680'];
function terrain(){
  let seed=7;const rnd=()=>(seed=(seed*16807)%2147483647)/2147483647;
  const inside=(p,x,y)=>{let c=false;for(let i=0,j=p.length-2;i<p.length;j=i,i+=2){if((p[i+1]>y)!==(p[j+1]>y)&&x<(p[j]-p[i])*(y-p[i+1])/(p[j+1]-p[i+1])+p[i])c=!c}return c};
  let s='';
  for(const p of ISLES){
    let d='';for(let i=0;i<p.length;i+=2)d+=p[i]+','+p[i+1]+' ';
    s+=`<polygon points="${d}" fill="#b6b5c0" stroke="#7fa8e0" stroke-width="2" stroke-dasharray="14 9"/>`;
    const xs=p.filter((_,i)=>i%2===0),ys=p.filter((_,i)=>i%2);
    for(let y=Math.min(...ys);y<Math.max(...ys);y+=11)for(let x=Math.min(...xs);x<Math.max(...xs);x+=24){
      const X=x+rnd()*18-9,Y=y+rnd()*8-4;if(!inside(p,X,Y))continue;
      const r=rnd(),a=12+rnd()*16,b=10+rnd()*16,g=Math.floor(170+rnd()*32);
      const f=r<.02?'#8d8c97':`rgb(${g},${g-1},${g+8})`;
      s+=`<path d="M${X-a} ${Y+a/2}L${X} ${Y-a/6}L${X+b} ${Y+b/4}L${X+b-a} ${Y+b/4+a/2+3}z" fill="${f}"/>`;
      if(r>.4&&r<.6)s+=`<path d="M${X-b} ${Y+4}l${b} ${b/3}l${a} -${a/2}" stroke="#8b8a95" stroke-width="1.500" fill="none"/>`;
    }
  }
  s+=SIDE.map(c=>`<polygon points="${c}" fill="#97969d"/>`).join('')+CLIFF.map(c=>`<polygon points="${c}" fill="#6d6c7b"/>`).join('');
  s+=[[280,293],[590,210],[625,275],[310,518],[428,535],[655,400],[1050,170],[1128,278],[1040,360],[1058,450],[822,550],[898,575],[1082,605],[1395,602],[1455,640],[1410,370],[1436,385],[1335,490],[1495,315],[792,365],[848,596],[1455,50]].map(([x,y])=>`<path d="M${x-12} ${y+3}l8 -13l14 6l-6 15z" fill="#f4f4fa"/>`).join('');
  return s;
}
const boat=(x,y,m)=>`<g transform="translate(${x} ${y}) scale(${m} 1)"><path d="M-52 5l2 14 88 48 22-6 6-24-10 2-6 12-16 2-60-34-16-14z" fill="#9b9aa8"/><path d="M-50 12l86 46M-50 19l88 47M48 60l16-20" stroke="#73727f" stroke-width="3" fill="none"/><path d="M-40 6l80 44" stroke="#73727f" stroke-width="4" stroke-dasharray="5 5"/><path d="M-23 -26l46-18v42l-46 18z" fill="#85879b"/><path d="M-12 -30v46M10 -38v46" stroke="#6b6c7b" stroke-width="2"/><path d="M-5 -40v68" stroke="#777685" stroke-width="5"/><path d="M-72 -20l20 6 4 22M48 50l-2-34 12 10 4 14" stroke="#84838f" stroke-width="4" fill="none"/></g>`;
define('view-3d',`
:host{position:relative;overflow:hidden;background:#5a5a63}
svg{display:block;width:100%;height:100%}
span{position:absolute;color:#eee}
.a{left:15px;top:7px}.p{left:53px;bottom:3px}`,
 ()=>`<svg viewBox="3 39 1659 750" preserveAspectRatio="none"><rect x="0" y="30" width="1670" height="770" fill="#b3b3c5"/>${terrain()}
 ${boat(390,112,1)}${boat(1318,110,1)}${boat(738,474,-1)}
 <path d="M0 30h149v770H0zM1516 30h150v770h-150z" fill="#000" opacity=".49"/>
 <path d="M148.500 30v770M1514.500 30v770" stroke="#111" stroke-width="3"/><path d="M149 30v770M1518 30v770" stroke="#c02020" stroke-width="3" stroke-dasharray="5 6"/>
 <g fill="none" stroke="#111" stroke-width="2.500"><path d="M217 30v194M420 38l55 30M1145 38Q1190 95 1260 130Q1340 170 1420 190Q1530 212 1662 203"/><path d="M1372 240L1662 207" stroke-dasharray="8 7"/>
 <path d="M1662 402L1605 385L1565 395L1535 430L1527 480L1545 560L1570 620L1662 700M1527 480L1600 458L1662 450M1540 560L1525 620L1535 680L1565 710L1605 715L1662 698M1525 620L1580 640M1662 400L1595 450M1527 490L1490 515L1475 550L1490 590L1520 610"/>
 <path d="M799 268l14 115M806 300l11 98"/></g>
 <path d="M820 382V290" stroke="#23238f" stroke-width="4"/><path d="M809 296l11-38 11 38z" fill="#14147c"/>
 <path d="M845 402l75-42" stroke="#3c9a3c" stroke-width="3.500"/><path d="M954 342l-38 6 10 17z" fill="#17801b"/>
 <path d="M845 428l78 42" stroke="#9a2c2c" stroke-width="3.500"/><path d="M955 490l-38-8 12-18z" fill="#851616"/>
 <circle cx="820" cy="415" r="34" fill="none" stroke="#f2f2f2" stroke-width="3"/><circle cx="820" cy="415" r="7" fill="#7fb0e8" stroke="#1b2f50" stroke-width="3"/>
 <circle cx="1040" cy="750" r="23" fill="none" stroke="#fff" stroke-width="4"/><circle cx="1040" cy="750" r="23" fill="none" stroke="#d82020" stroke-width="4" stroke-dasharray="9 9"/>
 <path d="M995 748h32M1053 748h31M1040 702v34M1040 762v30" stroke="#111" stroke-width="3"/>
 <path d="M62 732V684" stroke="#2c2c9c" stroke-width="4"/><path d="M62 732l46-26" stroke="#2c8a2c" stroke-width="4"/><path d="M62 732l36 20" stroke="#9c2c2c" stroke-width="4"/>
 <path d="M66 668h10l-10 11h10" stroke="#2c2c9c" fill="none" stroke-width="3"/><path d="M107 694l5 6 6-6M112 700v8" stroke="#2c8a2c" fill="none" stroke-width="3"/><path d="M108 738l10 10M118 738l-10 10" stroke="#9c2c2c" stroke-width="3"/><path d="M108 708l16 10 18 2" stroke="#1d2c40" fill="none" stroke-width="3"/></svg>
 <span class="a">Camera Ortho</span><span class="p">(0) Plane</span>`);
define('tool-shelf',`
:host{display:flex;flex-direction:column;background:#1e242c;--fg:#bdbdbd;--line:transparent;overflow:hidden}
.u{display:flex;height:160px;overflow:hidden}
.tabs{flex:none;width:15px;background:#3d5b78;display:flex;flex-direction:column;gap:3px;padding-top:4px}
.tabs button{writing-mode:vertical-rl;transform:rotate(180deg);background:#14181c;color:#ddd;border-radius:0 3px 3px 0;width:13px;line-height:13px;flex:none;text-align:center;overflow:hidden;font-family:"DejaVu Sans",sans-serif}
.tabs button.on{background:#2e5c8c;color:#fff}
.p{flex:1;padding:0 5px 0 4px;overflow:hidden;--hp:5px}
.b{padding:6px 3px 0 2px;display:flex;flex-direction:column;gap:1px;--ta:left;--btn:linear-gradient(#2e3a46,#35424e)}
.m{margin:4px 0 5px}
bl-scroll{margin:4px 3px 2px 0;flex:none}
.o{flex:1;border-top:1px solid #2e3a46;--hp:8px;padding-right:6px}`,
 ()=>`<div class="u"><div class="tabs">${[['To',16],['Cr',17],['Rela',25],['Anim',25],['Phy',23],['Grease',34]].map((t,i)=>`<button class="${i?'':'on'}" style="height:${t[1]}px">${t[0]}</button>`).join('')}</div><div class="p">
 <bl-panel first title="Transform"><div class="b"><bl-button label="Translate"></bl-button><bl-button label="Rotate"></bl-button><bl-button label="Scale"></bl-button><bl-button class="m" label="Mirror"></bl-button></div></bl-panel>
 <bl-panel title="Edit"><div class="b"><bl-button label="Duplicate"></bl-button><bl-button label="Duplicate Linked"></bl-button><bl-button label="Delete"></bl-button></div></bl-panel></div><bl-scroll style="height:auto;--t:82px"></bl-scroll></div>
 <div class="o"><bl-panel first title="Operator"></bl-panel></div>`);
const xyz=a=>`<div class="t"><div class="n">${a.map((v,i)=>`<bl-num label="${'XYZ'[i]}:" value="${v}"></bl-num>`).join('')}</div><div class="k">${a.map(()=>`<button aria-label="Lock">${ic('unlock',11)}</button>`).join('')}</div></div>`;
define('view-sidebar',`
:host{display:flex;background:#1e242c;--fg:#bdbdbd;overflow:hidden;position:relative;--num:linear-gradient(#2a333c,#323d47)}
.p{flex:1;padding:0 3px 0 5px;margin-top:-1px;min-width:0;--hp:4px}
.b{padding:7px 3px 0 1px}
h3{font:inherit;color:#ddd;margin:0 0 0 5px}
.t{display:grid;grid-template-columns:82px 19px;justify-content:space-between;margin-bottom:2px}
.n{display:flex;flex-direction:column;gap:1px;border-radius:6px;overflow:hidden;--r:0}
.k{display:flex;flex-direction:column;gap:1px}
.k button{height:14px;background:#29435f;display:flex;align-items:center;justify-content:center}
.g{margin-top:4px}
.e{margin-bottom:3px}
bl-scroll{margin:4px 3px 2px 0;flex:none}
.h{position:absolute;right:0;top:0}`,
 ()=>`<div class="p"><bl-panel first title="Transform"><div class="b"><h3>Location:</h3>${xyz(['0.00000','0.00000','0.00000'])}<h3 class="g">Rotation:</h3>${xyz(['0°','0°','0°'])}<bl-select class="e" value="XYZ Euler"></bl-select><h3>Scale:</h3>${xyz(['5.000','5.000','5.000'])}<h3 class="g">Dimensions:</h3><bl-num label="X:" value="10.00000"></bl-num></div></bl-panel></div><bl-scroll style="height:auto;--t:65px"></bl-scroll><div class="h">${ic('hatch',9)}</div>`);
define('view-editor',`
:host{display:flex;flex-direction:column;min-height:0}
.c{flex:1;display:grid;grid-template-columns:120px minmax(0,1fr) 134px;min-height:0}
bl-bar>*{margin-right:5px}
.l{display:grid;grid-template-columns:repeat(5,7px);grid-template-rows:7px 7px;gap:0;flex:none}
.l i{background:#34465a;box-shadow:inset 0 0 0 1px #263341}
.l i.d{background:radial-gradient(circle,#f0a040 30%,#34465a 45%)}`,
 ()=>`<div class="c"><tool-shelf></tool-shelf><view-3d></view-3d><view-sidebar></view-sidebar></div>
 <bl-bar><bl-type icon="cubewhite" style="margin-right:9px"></bl-type><bl-menus items="View,Select,Add,Object" style="margin-right:13px"></bl-menus><bl-select icon="cube" value="Object Mode" style="width:83px;--pl:17px"></bl-select><bl-type icon="white"></bl-type><bl-type icon="median" style="margin-right:1px"></bl-type><bl-tool icons="arrows"></bl-tool><bl-tool icons="manip,move,rotate,scale" on="manip,move" style="margin-right:1px"></bl-tool><bl-select value="Global" style="width:53px"></bl-select>
 <div class="l"><i class="d"></i>${'<i></i>'.repeat(9)}</div><div class="l">${'<i></i>'.repeat(10)}</div><bl-tool icons="locklayer" on="locklayer"></bl-tool><bl-tool icons="prop"></bl-tool><bl-tool icons="magnet" style="margin-right:0"></bl-tool><bl-type icon="snapbar" style="margin-right:1px"></bl-type><bl-tool icons="snapgrid"></bl-tool><bl-tool icons="renderstar,clapper"></bl-tool></bl-bar>`);

/* ---------- outliner ---------- */
const ROWS=[['RenderLayers','layers','+','layersdata'],['World','world',''],['Camera','camobj','+','camdata','vsr'],['Empty','empty','','','vsr'],['Empty.001','empty','','','vsr'],['Empty.002','empty','','','vsr'],['Grid','mesh','+','meshdata','vsr'],['Plane','mesh','+','meshdata,wrench','vsr','act'],['Point','lamp','+','point','-sr'],['Point.001','lamp','+','point','-sr'],['Point.002','lamp','+','point','-sr'],['cloud','mesh','+','meshdata,wrench','-s-'],['cloud.001','mesh','+','meshdata,wrench','-s-'],['cloudDispOff','empty','','','vsr'],['greekBoat.000','mesh','+','meshdata','vsr'],['greekBoat.001','mesh','+','meshdata','vsr'],['greekBoat.002','mesh','+','meshdata','vsr'],['lamp.night','lamp','+','sun','-s-'],['lamp.sun','lamp','+','sun','vsr','sel']];
define('out-liner',`
:host{display:flex;flex-direction:column;min-height:0}
ul{list-style:none;margin:0;padding:1px 0 0;flex:1;position:relative;overflow:hidden;background:repeating-linear-gradient(#484848 0 15px,#505050 15px 30px) 0 1px;font-family:"DejaVu Sans",sans-serif}
li{display:flex;height:15px;align-items:center;color:#b2b2b2}
.m{flex:1;display:flex;align-items:center;height:14px;padding-left:18px;gap:4px}
.e{width:9px;display:flex;justify-content:center;margin-right:-1px}
li.top .m{padding-left:4px}
.bar{width:1px;height:9px;background:#151515;margin:0 3px 0 4px}
.x{display:flex;gap:3px}
.r{display:flex;flex:none;height:15px}
.r span{width:15px;border-left:1px solid #3a3a3a;display:flex;align-items:center;justify-content:center}
li.act .n{color:#fff}
li.act .i{background:#41658f;border-radius:50%}
li.sel .m{background:#7b8187}
.i{display:flex}
.n{padding:1px 0 0 1px}
.line{position:absolute;left:23px;top:16px;width:1px;height:285px;background:#6a6a6a}
.h{position:absolute;right:0;top:0}
bl-bar{height:20px;border-bottom:1px solid #000}`,
 ()=>`<ul><div class="line"></div><li class="top"><div class="m"><span class="e">${ic('collapse',8)}</span><span class="i">${ic('scene',13)}</span><span class="n">Scene</span></div><div class="r"><span></span><span></span><span></span></div></li>
 ${ROWS.map(r=>`<li class="${r[5]||''}"><div class="m"><span class="e">${r[2]?ic('expand',8):''}</span><span class="i">${ic(r[1],12)}</span><span class="n">${r[0]}</span>${r[3]?`<span class="bar"></span><span class="x">${r[3].split(',').map(n=>ic(n,12)).join('')}</span>`:''}</div><div class="r"><span>${r[4]?ic(r[4][0]==='v'?'eye':'eyeoff',10):''}</span><span>${r[4]?ic('cursor',10):''}</span><span>${r[4]?ic(r[4][2]==='r'?'rendercam':'camoff',10):''}</span></div></li>`).join('')}
 ${'<li><div class="m"></div><div class="r"><span></span><span></span><span></span></div></li>'.repeat(3)}<div class="h">${ic('hatch',9)}</div></ul>
 <bl-bar><bl-type icon="outliner" style="margin-right:9px"></bl-type><bl-menus items="View,Search" style="margin-right:10px"></bl-menus><bl-select value="All Scenes" style="width:88px;margin-right:5px"></bl-select><bl-field icon="search" name="Search" style="width:82px"></bl-field></bl-bar>`);

/* ---------- properties ---------- */
define('bl-modifier',`
:host{border-radius:3px;overflow:hidden;background:linear-gradient(#454b54,#2d343d);--num:linear-gradient(#353d46,#3d464f);margin-bottom:6px;box-shadow:0 0 0 1px #2a2a2a88}
header{display:flex;align-items:center;height:21px;background:linear-gradient(#2c3036,#363c44);padding:0 3px 0 6px}
header bl-field{width:121px;margin:0 7px 0 8px}
header .i{margin:0 0 0 11px;display:flex}
.z{margin-left:7px}
.b{padding:4px 3px 9px}`,
 e=>`<header>${ic('tridown',10)}<span class="i">${ic(at(e,'icon'))}</span><bl-field grey value="${at(e,'title')}"></bl-field><bl-tool style="--w:19px" icons="rendercam,eye,edit,meshdata" on="${at(e,'on')}"></bl-tool><bl-tool class="z" style="--w:17px" size="9" icons="triup,tridown"></bl-tool><bl-icon name="x" style="--s:9px;margin:0 3px 0 auto"></bl-icon></header><div class="b"><slot></slot></div>`);
define('prop-editor',`
:host{display:flex;flex-direction:column;min-height:0}
.c{flex:1;background:#3b3b3b;padding:4px 7px 0;overflow:hidden;border-top:1px solid #4a4a4a}
.crumb{display:flex;align-items:center;gap:4px;height:19px;margin-bottom:11px}
.crumb em{width:10px}
.crumb b{font:inherit;font-family:"DejaVu Sans",sans-serif;padding-top:1px}
.two,.three{display:grid;grid-template-columns:1fr 1fr;column-gap:7px}
.three{grid-template-columns:1fr 1fr 1fr}
.btn{--r:4px;--btn:linear-gradient(#3d4752,#35404b)}
.seg{display:grid;grid-template-columns:1fr 1fr;margin:7px 0 2px;--r:1px}
.l{padding-left:6px;margin-top:1px;line-height:16px}
.col{display:flex;flex-direction:column;gap:3px}
.chk{padding-left:2px;--g:7px;--cfg:#ececec}
bl-bar{height:19px}
.tex{display:flex;--r:0}
.tex bl-field{flex:1;margin-left:1px}`,
 ()=>`<bl-bar><bl-type icon="props" style="margin-right:8px"></bl-type><bl-tool icons="rendercam,layers,scene,world,cube,link,wrench,meshdata,mat,checker,particles,physics" on="wrench"></bl-tool></bl-bar>
 <div class="c"><div class="crumb">${ic('pin')}${ic('scene')}<em></em>${ic('cube')}<b>Plane</b></div>
 <bl-select value="Add Modifier" style="margin-bottom:5px"></bl-select>
 <bl-modifier title="Subsurf" icon="subsurf" on="rendercam,eye,edit"><div class="two btn"><bl-button label="Apply"></bl-button><bl-button label="Copy"></bl-button></div><div class="seg"><bl-button label="Catmull-Clark"></bl-button><bl-button on label="Simple"></bl-button></div>
 <div class="two"><div><div class="l">Subdivisions:</div><div class="col"><bl-num label="View:" value="2"></bl-num><bl-num label="Render:" value="5"></bl-num></div></div><div><div class="l">Options:</div><div class="col chk"><bl-check checked label="Subdivide UVs"></bl-check><bl-check checked label="Optimal Display"></bl-check></div></div></div></bl-modifier>
 <bl-modifier title="Displace" icon="displace" on="rendercam,eye"><div class="three btn"><bl-button label="Apply"></bl-button><bl-button label="Apply as Shape Key"></bl-button><bl-button label="Copy"></bl-button></div>
 <div class="l" style="margin-top:6px">Texture:</div><div class="tex"><bl-type icon="checker"></bl-type><bl-field grey value="Texture.001"></bl-field><bl-tool icons="F" style="--w:34px;--fg:#8f98a3"></bl-tool><bl-tool icons="plus,x,props" size="10"></bl-tool></div>
 <div class="two"><div><div class="l">Direction:</div><bl-select value="Normal"></bl-select><div class="l">Vertex Group:</div><bl-field grey icon="vgroup" name="Vertex Group"></bl-field></div><div><div class="l">Texture Coordinates:</div><bl-select value="Object"></bl-select><div class="l">Object:</div><bl-field grey icon="cube" end="x" value="Empty.002"></bl-field></div></div>
 <div class="two" style="margin-top:8px"><bl-num slide label="Midlevel:" value="0.500" style="--fill:52%;--fg:#eee"></bl-num><bl-num label="Strength:" value="0.250"></bl-num></div></bl-modifier></div>`);

/* ---------- timeline ---------- */
define('time-line',`
:host{display:flex;flex-direction:column;border-top:1px solid #000}
.t{flex:1;background:#303030;padding:0 17px 0 15px;position:relative;overflow:hidden}
.g{height:100%;background:repeating-linear-gradient(90deg,#484848 0 29px,#575757 29px 30px);border-left:2px solid #3d8bf5}
.s{height:12px;margin:0 0 1px;background:linear-gradient(#44607f,#34506f);border-radius:6px;display:flex;justify-content:space-between;align-items:center;padding:0 6px 0 3px;line-height:12px;color:#b5bcc4;font-family:"DejaVu Sans",sans-serif}
.s::before,.s::after{content:"";width:7px;height:7px;border-radius:50%;background:#2c2f5c}
.s span{width:28px;text-align:center}
.s span:first-of-type{width:11px;text-align:left;margin-right:-3px}
.s span:last-of-type{width:17px;text-align:left}
.h{position:absolute;right:0;top:0}
bl-bar>*{margin-right:3px}`,
 ()=>`<div class="t"><div class="g"></div><div class="h">${ic('hatch',9)}</div></div><div class="s"><span>0</span><span>50</span><span>100</span><span>150</span><span>200</span><span>250</span></div>
 <bl-bar style="--num:linear-gradient(#333b43,#3a434c)"><bl-type icon="clock" style="margin-right:9px"></bl-type>${ic('lines',9)}<bl-tool icons="pie,lock" style="margin-left:4px;margin-right:5px"></bl-tool><bl-num label="Start:" value="1" style="width:86px;margin-right:1px"></bl-num><bl-num label="End:" value="250" style="width:83px;margin-right:5px"></bl-num><bl-num name="Current frame" value="0" style="flex:1;margin-right:0"></bl-num></bl-bar>`);

/* ---------- window ---------- */
define('title-bar',`
:host{display:grid;box-sizing:border-box;grid-template-columns:1fr auto 1fr;align-items:center;height:17px;background:linear-gradient(#ebe9eb,#d0ced0);border-bottom:1px solid #8c8a8c;color:#3d3d3d}
.d{display:flex;gap:6px;padding-left:6px}
.d button{width:9px;height:9px;border-radius:50%;background:#f7b32f}
.d button:first-child{background:radial-gradient(circle,#7a1010 15%,#f4504a 30%)}
.d button:last-child{background:#2bbd3a}
h1{font:10px/16px Inter,"Liberation Sans",sans-serif;margin:0;display:flex;align-items:center;gap:3px}`,
 ()=>`<div class="d"><button aria-label="Close"></button><button aria-label="Minimize"></button><button aria-label="Zoom"></button></div><h1>${ic('doc',11)}mineLake.blend</h1><span></span>`);
define('blender-app',`
:host{display:flex;flex-direction:column;height:100vh;overflow:hidden}
.info{height:20px;border-bottom:1px solid #000;flex:none}
main{flex:1;min-height:0;display:grid;grid-template-columns:minmax(0,1fr) 331px}
.l{display:flex;flex-direction:column;border-right:1px solid #000;min-width:0;min-height:0}
node-editor{flex:1;border-bottom:1px solid #000}
.d{display:grid;grid-template-columns:781px minmax(0,1fr);height:270px;flex:none}
.r{display:flex;flex-direction:column;min-width:0;min-height:0}
out-liner{height:354px;flex:none}
prop-editor{flex:1}
time-line{height:108px;flex:none}
.stat{font-family:"DejaVu Sans",sans-serif;color:#c4c4c4;padding-top:1px}`,
 ()=>`<title-bar></title-bar><bl-bar class="info"><bl-type icon="info" style="margin-right:10px"></bl-type><bl-menus items="File,Render,Window,Help" style="margin-right:10px"></bl-menus><id-block icon="layout" value="Compositing" tools="plus,x" style="margin-right:5px"></id-block><id-block icon="scene" value="Scene" tools="plus,x" style="margin-right:14px"></id-block><bl-select value="Cycles Render" style="width:82px;margin-right:14px"></bl-select><bl-icon name="blender" style="margin-right:7px"></bl-icon><span class="stat">v2.79 | Verts:33,809 | Faces:33,295 | Tris:66,590 | Objects:1/17 | Lamps:0/5 | Mem:25.19M | Plane</span></bl-bar>
 <main><div class="l"><node-editor></node-editor><div class="d"><image-editor></image-editor><view-editor></view-editor></div></div><div class="r"><out-liner></out-liner><prop-editor></prop-editor><time-line></time-line></div></main>`);
</script>
</body>
</html>
